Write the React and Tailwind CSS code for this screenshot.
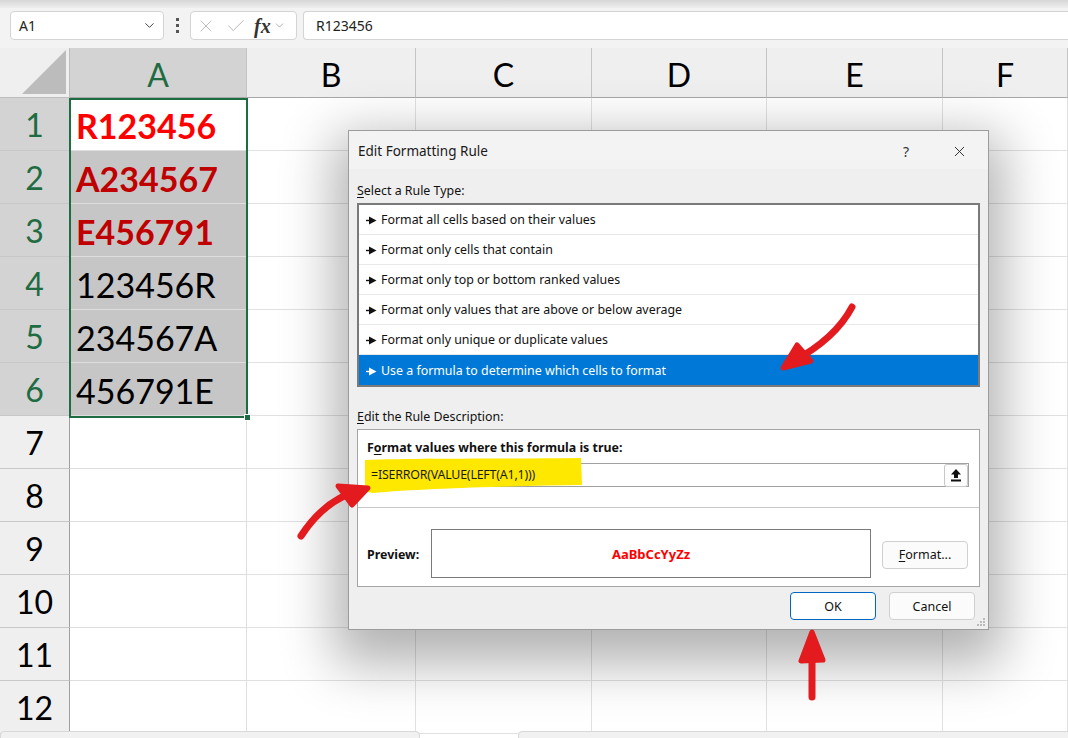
import React from 'react';
import { X, Check, ChevronDown } from 'lucide-react';

const COLUMNS = ['A', 'B', 'C', 'D', 'E', 'F'];

const CELLS = {
  1: { text: 'R123456', cls: 'font-bold text-[#ff0000]' },
  2: { text: 'A234567', cls: 'font-bold text-[#c00000]' },
  3: { text: 'E456791', cls: 'font-bold text-[#c00000]' },
  4: { text: '123456R', cls: 'text-black' },
  5: { text: '234567A', cls: 'text-black' },
  6: { text: '456791E', cls: 'text-black' },
};

const RULE_TYPES = [
  'Format all cells based on their values',
  'Format only cells that contain',
  'Format only top or bottom ranked values',
  'Format only values that are above or below average',
  'Format only unique or duplicate values',
  'Use a formula to determine which cells to format',
];

function Pointer({ light }) {
  return (
    <svg width="11" height="9" viewBox="0 0 11 9" className="shrink-0">
      <path d="M0 4.5H4" stroke={light ? '#fff' : '#111'} strokeWidth="1.4" />
      <path d="M3 0.5L10.5 4.5L3 8.5Z" fill={light ? '#fff' : '#111'} />
    </svg>
  );
}

function FormulaBar() {
  return (
    <div className="h-[48px] bg-[#f3f3f3] relative">
      <div className="h-[8px] bg-gradient-to-b from-[#d6d6d6] to-[#eeeeee]" />
      <div className="flex items-center h-[31px] mt-[2px]">
        <div className="ml-[10px] w-[154px] h-[29px] bg-white border border-[#d4d4d4] rounded-[4px] flex items-center justify-between pl-[8px] pr-[6px] text-[14px] text-[#222]">
          <span>A1</span>
          <ChevronDown size={15} strokeWidth={1.6} className="text-[#444]" />
        </div>
        <div className="w-[26px] flex flex-col items-center gap-[3px]">
          <span className="w-[3px] h-[3px] bg-[#555]" />
          <span className="w-[3px] h-[3px] bg-[#555]" />
          <span className="w-[3px] h-[3px] bg-[#555]" />
        </div>
        <div className="w-[107px] h-[29px] bg-white border border-[#d4d4d4] rounded-[4px] flex items-center pl-[5px]">
          <X size={20} strokeWidth={1} className="text-[#b0b0b0]" />
          <Check size={22} strokeWidth={1} className="text-[#b0b0b0] ml-[9px]" />
          <span className="ml-[7px] font-['Liberation_Serif'] italic font-bold text-[20px] leading-none text-[#333]">fx</span>
          <ChevronDown size={13} strokeWidth={1.2} className="text-[#888] ml-[2px]" />
        </div>
        <div className="ml-[6px] flex-1 h-[29px] bg-white border-y border-l border-[#d4d4d4] rounded-l-[4px] flex items-center pl-[12px] text-[14px] text-[#222]">
          R123456
        </div>
      </div>
    </div>
  );
}

function Sheet() {
  const rows = Array.from({ length: 12 }, (_, i) => i + 1);
  return (
    <div className="relative font-['Lato'] grid grid-cols-[70px_177px_169px_176px_175px_176px_1fr] grid-rows-[50px] auto-rows-[53px]">
      {/* corner */}
      <div className="bg-[#efefef] border-r border-b border-[#bdbdbd] flex items-end justify-end pr-[3px] pb-[3px]">
        <svg width="44" height="44" viewBox="0 0 44 44">
          <path d="M44 0V44H0Z" fill="#bcbcbc" />
        </svg>
      </div>
      {COLUMNS.map((c) => (
        <div
          key={c}
          className={`flex items-center justify-center pt-[4px] text-[32px] border-b border-b-[#a8a8a8] border-r border-r-[#c4c4c4] ${
            c === 'A' ? 'bg-[#d3d3d3] text-[#1f6b42]' : 'bg-[#efefef] text-black'
          }`}
        >
          {c}
        </div>
      ))}

      {rows.map((r) => {
        const cell = CELLS[r];
        const sel = r <= 6;
        return (
          <React.Fragment key={r}>
            <div
              className={`flex items-center justify-center pt-[2px] text-[32px] border-r border-r-[#a0a0a0] border-b border-b-[#c8c8c8] ${
                sel ? 'bg-[#d3d3d3] text-[#1f6b42]' : 'bg-[#efefef] text-black'
              }`}
            >
              {r}
            </div>
            <div
              className={`flex items-center pl-[6px] pt-[3px] text-[34px] border-r border-b border-[#dedede] ${
                sel && r > 1 ? 'bg-[#c6c6c6]' : 'bg-white'
              } ${cell ? cell.cls : ''}`}
            >
              {cell ? cell.text : ''}
            </div>
            {[0, 1, 2, 3, 4].map((k) => (
              <div key={k} className="bg-white border-r border-b border-[#e1e1e1]" />
            ))}
          </React.Fragment>
        );
      })}

      {/* selection outline A1:A6 */}
      <div className="absolute left-[69px] top-[50px] w-[179px] h-[320px] border-2 border-[#1e6c41] pointer-events-none" />
      <div className="absolute left-[244px] top-[366px] w-[7px] h-[7px] bg-[#1e6c41] border border-white pointer-events-none" />
    </div>
  );
}

function Dialog() {
  return (
    <div className="absolute left-[348px] top-[130px] w-[641px] h-[500px] bg-[#efefef] border border-[#9c9c9c] shadow-[0_20px_50px_14px_rgba(0,0,0,0.3)] font-['Noto_Sans'] text-[12.4px] text-[#111] flex flex-col">
      <div className="h-[38px] bg-[#f3f3f3] flex items-center pt-[2px] pl-[9px] pr-[20px]">
        <span className="text-[13.5px] text-[#1a1a1a]">Edit Formatting Rule</span>
        <span className="ml-auto text-[14px] text-[#333] mr-[42px]">?</span>
        <X size={17} strokeWidth={1.3} className="text-[#222]" />
      </div>

      <div className="px-[8px] flex-1 flex flex-col">
        <div className="mt-[14px] leading-[16px]">
          <span className="underline underline-offset-2">S</span>elect a Rule Type:
        </div>
        <div className="mt-[4px] h-[184px] bg-white border-2 border-[#7a7a7a]">
          {RULE_TYPES.map((t, i) => {
            const active = i === RULE_TYPES.length - 1;
            return (
              <div
                key={t}
                className={`h-[30px] flex items-center gap-[4px] pl-[7px] pt-[2px] ${
                  active ? 'bg-[#0078d7] text-white' : 'border-b border-[#e8e8e8]'
                }`}
              >
                <Pointer light={active} />
                <span>{t}</span>
              </div>
            );
          })}
        </div>

        <div className="mt-[22px] leading-[16px]">
          <span className="underline underline-offset-2">E</span>dit the Rule Description:
        </div>
        <div className="mt-[4px] h-[158px] bg-white border border-[#a5a5a5] flex flex-col">
          <div className="mt-[10px] ml-[9px] leading-[16px] font-bold">
            F<span className="underline underline-offset-2">o</span>rmat values where this formula is true:
          </div>
          <div className="relative mt-[7px] ml-[8px] w-[603px] h-[24px] bg-white border border-[#a0a0a0] flex items-center">
            <svg className="absolute left-[-3px] top-[-6px] overflow-visible" width="222" height="36" viewBox="0 0 222 36">
              <path d="M1 2C60 0 150 1 217 0L218 27C150 28 60 30 8 35L1 33Z" fill="#ffe800" />
            </svg>
            <span className="relative pl-[4px] pt-[1px] text-[#1a1a1a] tracking-[-0.2px]">=ISERROR(VALUE(LEFT(A1,1)))</span>
            <div className="ml-auto mr-0 w-[24px] h-[23px] border border-[#c8c8c8] rounded-[3px] bg-[#fdfdfd] flex items-center justify-center">
              <svg width="12" height="14" viewBox="0 0 12 14">
                <path d="M6 1L11 6.5H8V10H4V6.5H1Z" fill="#111" />
                <rect x="1" y="11.5" width="10" height="2" fill="#111" />
              </svg>
            </div>
          </div>
          <div className="mt-[20px] h-px bg-[#cacaca]" />
          <div className="flex items-center mt-[21px] ml-[9px]">
            <span className="font-bold w-[64px] pt-[3px]">Preview:</span>
            <div className="w-[440px] h-[49px] border border-[#7a7a7a] flex items-center justify-center pt-[3px] font-bold text-[13px] text-[#ff0000]">
              AaBbCcYyZz
            </div>
            <div className="ml-[11px] mt-[2px] w-[86px] h-[28px] border border-[#d0d0d0] rounded-[4px] bg-[#fbfbfb] flex items-center justify-center pt-[2px] text-[12.5px]">
              <span className="underline underline-offset-2">F</span>ormat...
            </div>
          </div>
        </div>

        <div className="flex justify-end gap-[13px] mt-[5px] mr-[5px]">
          <div className="w-[86px] h-[28px] bg-white border border-[#0067c0] rounded-[4px] flex items-center justify-center pt-[2px] text-[12.5px]">
            OK
          </div>
          <div className="w-[86px] h-[28px] bg-[#fbfbfb] border border-[#d0d0d0] rounded-[4px] flex items-center justify-center pt-[2px] text-[12.5px]">
            Cancel
          </div>
        </div>
      </div>
      <svg className="absolute right-[2px] bottom-[2px]" width="10" height="10" viewBox="0 0 10 10">
        <rect x="7" y="1" width="2" height="2" fill="#bbb" />
        <rect x="4" y="4" width="2" height="2" fill="#bbb" />
        <rect x="7" y="4" width="2" height="2" fill="#bbb" />
        <rect x="1" y="7" width="2" height="2" fill="#bbb" />
        <rect x="4" y="7" width="2" height="2" fill="#bbb" />
        <rect x="7" y="7" width="2" height="2" fill="#bbb" />
      </svg>
    </div>
  );
}

// hand-drawn red annotation arrows
function Arrows() {
  const red = '#e31b1f';
  return (
    <svg className="absolute inset-0 pointer-events-none" width="1068" height="738" viewBox="0 0 1068 738">
      <path d="M852 307C840 330 818 348 792 362" stroke={red} strokeWidth="7" strokeLinecap="round" fill="none" />
      <path d="M783 368L797 345L811 361Z" fill={red} stroke={red} strokeWidth="5" strokeLinejoin="round" />
      <path d="M301 536C314 516 334 497 360 490" stroke={red} strokeWidth="7" strokeLinecap="round" fill="none" />
      <path d="M368 488L338 486L352 505Z" fill={red} stroke={red} strokeWidth="5" strokeLinejoin="round" />
      <path d="M812 697V646" stroke={red} strokeWidth="7" strokeLinecap="round" fill="none" />
      <path d="M812 632L801 661L823 660Z" fill={red} stroke={red} strokeWidth="5" strokeLinejoin="round" />
    </svg>
  );
}

export default function App() {
  return (
    <div className="relative w-[1068px] h-[738px] overflow-hidden bg-white font-['Noto_Sans']">
      <FormulaBar />
      <Sheet />
      <Dialog />
      <Arrows />
      {/* sheet tab strip / scrollbar tops */}
      <div className="absolute left-0 top-[731px] w-[420px] h-[10px] bg-[#f1f1f1] border border-[#d8d8d8] rounded-t-[4px]" />
      <div className="absolute left-[518px] top-[731px] w-[560px] h-[10px] bg-[#f1f1f1] border border-[#d8d8d8] rounded-t-[4px]" />
    </div>
  );
}
